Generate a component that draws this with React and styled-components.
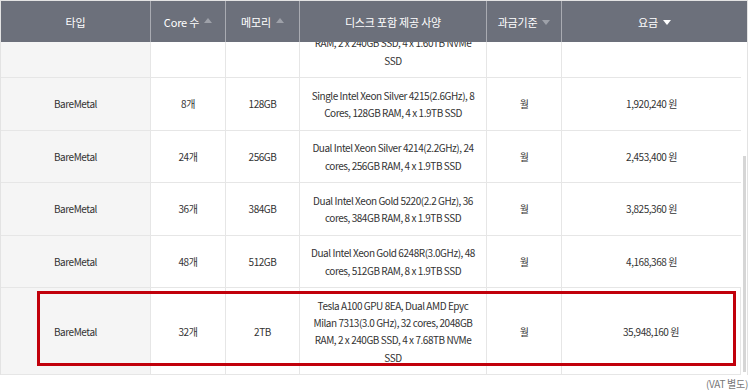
import React, { useLayoutEffect, useRef, useState } from 'react';
import styled, { createGlobalStyle } from 'styled-components';

const GlobalStyle = createGlobalStyle`
  body {
    margin: 0;
    background: #fff;
    font-family: "Noto Sans CJK KR", "Noto Sans", sans-serif;
    color: #333;
  }
`;

const COLUMNS = '150px 75px 74px 187px 75px 1fr';
const HEADER_H = 41;

const servers = [
  {
    type: 'BareMetal', core: '16개', mem: '1TB',
    spec: 'Tesla V100 GPU 4EA, Dual Intel Xeon Gold 6226R(2.9GHz), 32 cores, 1024GB RAM, 2 x 240GB SSD, 4 x 1.6TB NVMe SSD',
    unit: '월', price: '21,640,000 원',
  },
  {
    type: 'BareMetal', core: '10개', mem: '128GB',
    spec: 'Single Intel Xeon Silver 4210R(2.4GHz), 10 Cores, 128GB RAM, 4 x 1.9TB SSD',
    unit: '월', price: '1,780,500 원',
  },
  {
    type: 'BareMetal', core: '32개', mem: '1TB',
    spec: 'Tesla A100 GPU 4EA, Dual AMD Epyc Milan 7313(3.0 GHz), 32 cores, 1024GB RAM, 2 x 240GB SSD, 4 x 1.60TB NVMe SSD',
    unit: '월', price: '24,120,800 원',
  },
  {
    type: 'BareMetal', core: '8개', mem: '128GB',
    spec: 'Single Intel Xeon Silver 4215(2.6GHz), 8 Cores, 128GB RAM, 4 x 1.9TB SSD',
    unit: '월', price: '1,920,240 원',
  },
  {
    type: 'BareMetal', core: '24개', mem: '256GB',
    spec: 'Dual Intel Xeon Silver 4214(2.2GHz), 24 cores, 256GB RAM, 4 x 1.9TB SSD',
    unit: '월', price: '2,453,400 원',
  },
  {
    type: 'BareMetal', core: '36개', mem: '384GB',
    spec: 'Dual Intel Xeon Gold 5220(2.2 GHz), 36 cores, 384GB RAM, 8 x 1.9TB SSD',
    unit: '월', price: '3,825,360 원',
  },
  {
    type: 'BareMetal', core: '48개', mem: '512GB',
    spec: 'Dual Intel Xeon Gold 6248R(3.0GHz), 48 cores, 512GB RAM, 8 x 1.9TB SSD',
    unit: '월', price: '4,168,368 원',
  },
  {
    type: 'BareMetal', core: '32개', mem: '2TB',
    spec: 'Tesla A100 GPU 8EA, Dual AMD Epyc Milan 7313(3.0 GHz), 32 cores, 2048GB RAM, 2 x 240GB SSD, 4 x 7.68TB NVMe SSD',
    unit: '월', price: '35,948,160 원', highlight: true,
  },
];

const headers = [
  { label: '타입' },
  { label: 'Core 수', sort: 'up' },
  { label: '메모리', sort: 'up' },
  { label: '디스크 포함 제공 사양' },
  { label: '과금기준', sort: 'down' },
  { label: '요금', sort: 'down', active: true },
];

const Frame = styled.div`
  position: relative;
  box-sizing: border-box;
  width: 748px;
  border: 1px solid #e3e3e3;
  border-bottom: none;
`;

const HeaderRow = styled.div`
  display: grid;
  grid-template-columns: ${COLUMNS};
  height: ${HEADER_H}px;
  background: #6c707b;
`;

const HeaderCell = styled.div`
  display: flex;
  align-items: center;
  justify-content: center;
  gap: 5px;
  color: #fff;
  font-size: 11px;
  letter-spacing: -0.2px;
  border-right: 1px solid #a9abb2;
  &:last-child {
    border-right: none;
  }
`;

const SortArrow = styled.span`
  width: 0;
  height: 0;
  border-left: 4px solid transparent;
  border-right: 4px solid transparent;
  ${({ $dir, $active }) => {
    const color = $active ? '#fff' : '#9ea1a9';
    return $dir === 'up'
      ? `border-bottom: 5px solid ${color}; margin-top: -2px;`
      : `border-top: 5px solid ${color}; margin-top: 1px;`;
  }}
`;

/* native scrollbar hidden; a thin thumb is drawn over the gutter instead */
const ScrollBody = styled.div`
  height: 333px;
  padding-right: 6px;
  overflow-y: scroll;
  scrollbar-width: none;
  &::-webkit-scrollbar {
    display: none;
  }
`;

const ScrollThumb = styled.div`
  position: absolute;
  right: 1px;
  width: 3px;
  background: #d6d6d6;
  pointer-events: none;
`;

const Row = styled.div`
  position: relative;
  display: grid;
  grid-template-columns: ${COLUMNS};
  border-bottom: 1px solid #e6e6e6;
`;

const Cell = styled.div`
  display: flex;
  align-items: center;
  justify-content: center;
  padding: 8.5px 7px;
  font-size: 10px;
  letter-spacing: -0.45px;
  line-height: 17.25px;
  text-align: center;
  color: #333;
  background: ${({ $shade }) => ($shade ? '#f5f5f5' : '#fff')};
  border-right: 1px solid #e6e6e6;
  &:last-child {
    border-right: none;
  }
`;

const Highlight = styled.div`
  position: absolute;
  top: 3px;
  bottom: 8px;
  left: 36px;
  right: 5px;
  border: 3px solid #c1000b;
  pointer-events: none;
`;

const Note = styled.div`
  width: 748px;
  text-align: right;
  font-size: 10px;
  letter-spacing: -0.3px;
  line-height: 15px;
  color: #777;
  padding-top: 1px;
`;

export default function App() {
  const bodyRef = useRef(null);
  const [thumb, setThumb] = useState(null);

  useLayoutEffect(() => {
    const el = bodyRef.current;
    if (!el) return;
    el.scrollTop = el.scrollHeight;
    const { scrollTop, scrollHeight, clientHeight } = el;
    const height = (clientHeight * clientHeight) / scrollHeight;
    const top = HEADER_H + (scrollTop / scrollHeight) * clientHeight;
    setThumb({ top, height: height - 3 });
  }, []);

  return (
    <>
      <GlobalStyle />
      <Frame>
        <HeaderRow>
          {headers.map((h) => (
            <HeaderCell key={h.label}>
              {h.label}
              {h.sort && <SortArrow $dir={h.sort} $active={h.active} />}
            </HeaderCell>
          ))}
        </HeaderRow>
        <ScrollBody ref={bodyRef}>
          {servers.map((s, i) => (
            <Row key={i}>
              <Cell $shade>{s.type}</Cell>
              <Cell>{s.core}</Cell>
              <Cell>{s.mem}</Cell>
              <Cell>{s.spec}</Cell>
              <Cell>{s.unit}</Cell>
              <Cell>{s.price}</Cell>
              {s.highlight && <Highlight />}
            </Row>
          ))}
        </ScrollBody>
        {thumb && <ScrollThumb style={{ top: thumb.top, height: thumb.height }} />}
      </Frame>
      <Note>(VAT 별도)</Note>
    </>
  );
}
